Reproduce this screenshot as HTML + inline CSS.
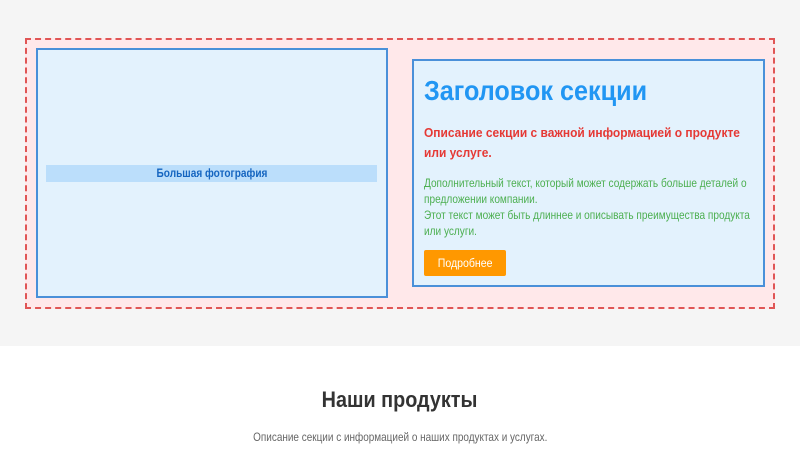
<!DOCTYPE html>
<html><head><meta charset="utf-8"><style>
*{margin:0;padding:0;box-sizing:border-box}
body{width:800px;height:450px;overflow:hidden;font-family:"Liberation Sans",sans-serif;background:#fff;position:relative}
.top{position:absolute;left:0;top:0;width:800px;height:346px;background:#f5f5f5}
.dash{position:absolute;left:25px;top:38px;width:750px;height:271px;border:2px dashed #e05555;background:#ffe8ea}
.left{position:absolute;left:36px;top:48px;width:352px;height:250px;border:2px solid #4a90d9;background:#e3f2fd}
.strip{position:absolute;left:46px;top:165px;width:331px;height:17px;background:#bbdefb;color:#1565c0;font-weight:bold;font-size:12px;text-align:center;line-height:17px}
.s{display:inline-block;white-space:nowrap;transform-origin:left center}
.c{transform-origin:center center}
.right{position:absolute;left:412px;top:59px;width:353px;height:228px;border:2px solid #4a90d9;background:#e3f2fd}
h1{position:absolute;left:10px;top:14px;font-size:28px;color:#2196f3;font-weight:bold;white-space:nowrap;transform:scaleX(.9);transform-origin:left center}
.red{position:absolute;left:10px;top:62px;font-size:13px;font-weight:bold;color:#e53935;line-height:20px;white-space:nowrap;transform:scaleX(.92);transform-origin:left top}
.green{position:absolute;left:10px;top:114px;font-size:12px;color:#4caf50;line-height:16px;white-space:nowrap;transform:scaleX(.84);transform-origin:left top}
.btn{position:absolute;left:10px;top:189px;width:82px;height:26px;background:#ff9800;border-radius:2px;color:#fff;font-size:12px;text-align:center;line-height:26px}
h2{position:absolute;left:0;width:800px;top:387px;text-align:center;font-size:22px;color:#333;font-weight:bold}
.desc{position:absolute;left:0;width:800px;top:430px;text-align:center;font-size:12px;color:#666}
</style></head><body>
<div class="top"></div>
<div class="dash"></div>
<div class="left"></div>
<div class="strip"><span class="s c" style="transform:scaleX(.84)">Большая фотография</span></div>
<div class="right">
<h1>Заголовок секции</h1>
<div class="red">Описание секции с важной информацией о продукте<br>или услуге.</div>
<div class="green">Дополнительный текст, который может содержать больше деталей о<br>предложении компании.<br>Этот текст может быть длиннее и описывать преимущества продукта<br>или услуги.</div>
<div class="btn"><span class="s c" style="transform:scaleX(.88)">Подробнее</span></div>
</div>
<h2><span class="s c" style="transform:scaleX(.9)">Наши продукты</span></h2>
<div class="desc"><span class="s c" style="transform:scaleX(.83)">Описание секции с информацией о наших продуктах и услугах.</span></div>
</body></html>
